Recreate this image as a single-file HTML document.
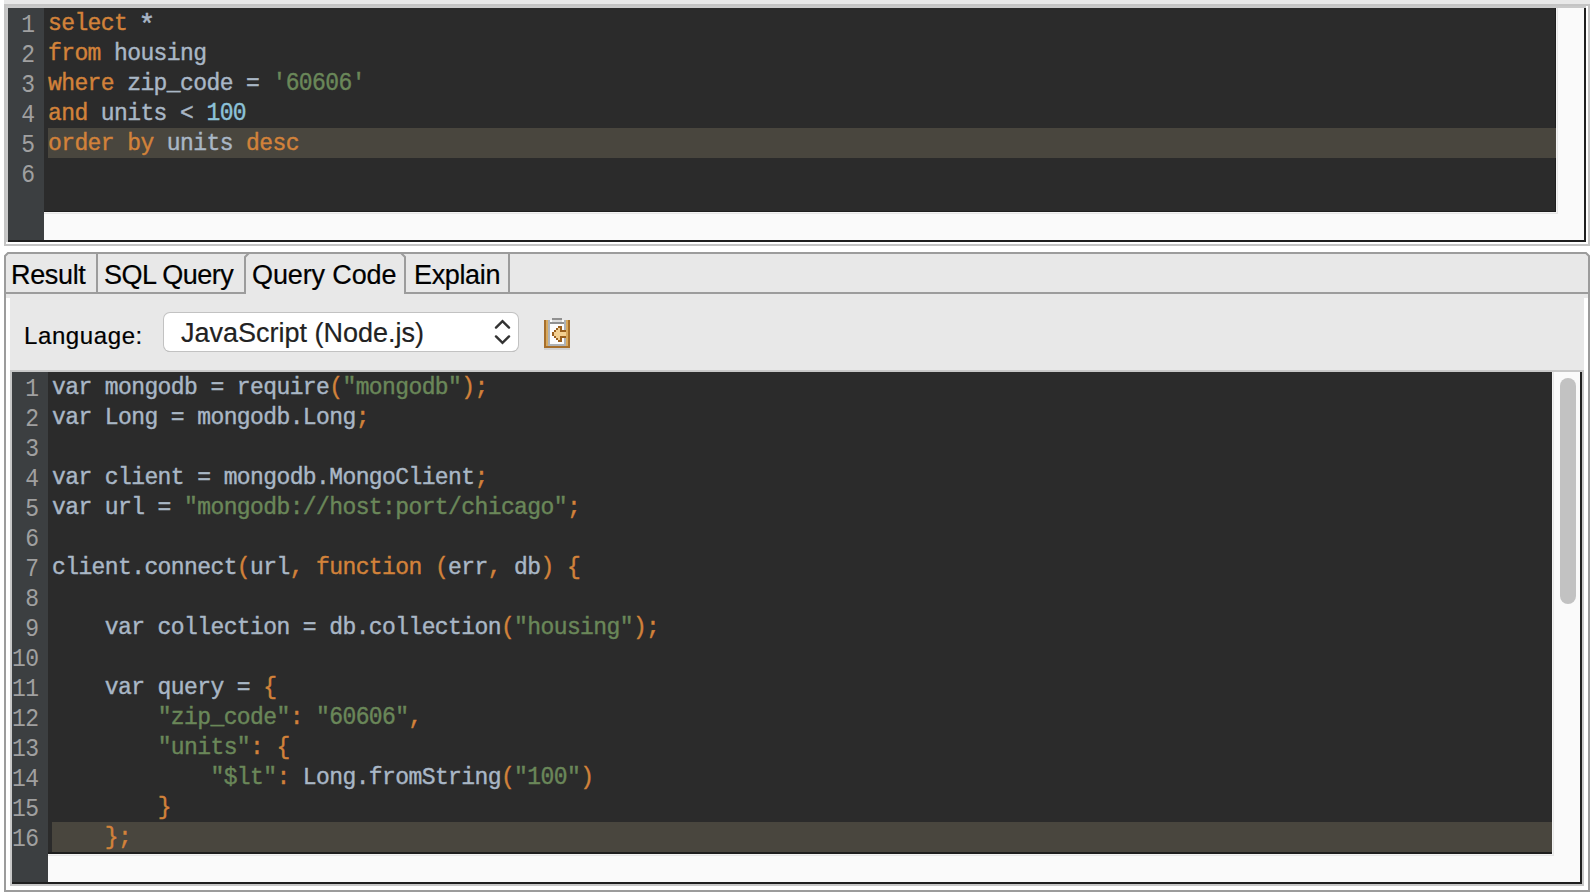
<!DOCTYPE html>
<html><head><meta charset="utf-8">
<style>
*{margin:0;padding:0;box-sizing:border-box}
html,body{width:1590px;height:892px;overflow:hidden;background:#fff;position:relative}
.abs{position:absolute}
.mono{font-family:"Liberation Mono",monospace;font-size:23px;letter-spacing:-0.6px;line-height:30px;white-space:pre;-webkit-text-stroke:0.4px}
.sans{font-family:"Liberation Sans",sans-serif;white-space:pre;color:#000}
.k{color:#d2823a}.s{color:#6a8759}.n{color:#8cc2d8}
.ln{position:absolute;left:0;height:30px;color:#a0a0a0;text-align:right;transform:translateY(3px) scaleY(1.09);transform-origin:0 21.1px;-webkit-text-stroke:0}
.cl{position:absolute;height:30px;color:#a9b7c6;transform:translateY(1px)}
.hl{background:#49463e}
.d{display:inline-block;transform:scaleY(1.12);transform-origin:0 21.1px}
.tab{top:258px;font-size:27px;line-height:34px;-webkit-text-stroke:0.2px #000}
</style></head><body>
<!-- top strip -->
<div class="abs" style="left:4px;top:0;width:1586px;height:4px;background:#e8e8e8"></div>
<!-- editor 1 frame -->
<div class="abs" style="left:4px;top:4px;width:1586px;height:242px;background:#c4c4c4"></div>
<div class="abs" style="left:6px;top:6px;width:1582px;height:238px;background:#fff"></div>
<div class="abs" style="left:6px;top:6px;width:1580px;height:236px;background:#c9c9c9"></div>
<div class="abs" style="left:8px;top:8px;width:1578px;height:234px;background:#1f1f1f"></div>
<div class="abs" style="left:8px;top:8px;width:1576px;height:232px;background:#fafafa"></div>
<div class="abs" style="left:8px;top:8px;width:36px;height:232px;background:#3c3f41"></div>
<div class="abs" style="left:44px;top:8px;width:1512px;height:204px;background:#2b2b2b"></div>
<div class="abs" style="left:44px;top:211px;width:1512px;height:1px;background:#1e1e1e"></div>
<div class="abs" style="left:1555px;top:8px;width:1px;height:204px;background:#1e1e1e"></div>
<div class="abs" style="left:44px;top:212px;width:1513px;height:1px;background:#f3f3f3"></div>
<div class="abs" style="left:1556px;top:8px;width:1px;height:205px;background:#f3f3f3"></div>
<div class="abs" style="left:44px;top:213px;width:1514px;height:1px;background:#e7e7e7"></div>
<div class="abs" style="left:1557px;top:8px;width:1px;height:206px;background:#e7e7e7"></div>
<div class="abs mono" id="ed1" style="left:8px;top:8px;width:1548px;height:204px">
<div class="hl" style="position:absolute;height:30px;left:40px;top:120px;width:1508px"></div>
<div class="ln" style="top:0;width:26.5px">1</div>
<div class="ln" style="top:30px;width:26.5px">2</div>
<div class="ln" style="top:60px;width:26.5px">3</div>
<div class="ln" style="top:90px;width:26.5px">4</div>
<div class="ln" style="top:120px;width:26.5px">5</div>
<div class="ln" style="top:150px;width:26.5px">6</div>
<div class="cl" style="left:40px;top:0"><span class="k">select</span> <span style="display:inline-block;transform:translateY(1.3px) scale(1.22)">*</span></div>
<div class="cl" style="left:40px;top:30px"><span class="k">from</span> housing</div>
<div class="cl" style="left:40px;top:60px"><span class="k">where</span> zip_code = <span class="s">'<span class="d">60606</span>'</span></div>
<div class="cl" style="left:40px;top:90px"><span class="k">and</span> units &lt; <span class="n"><span class="d">100</span></span></div>
<div class="cl" style="left:40px;top:120px"><span class="k">order</span> <span class="k">by</span> units <span class="k">desc</span></div>
</div>

<!-- tab header -->
<svg class="abs" style="left:0;top:0" width="1590" height="892">
<path d="M5,891 L5,256 L8,253 L1586,253 L1589,256 L1589,891 Z" fill="#e8e8e8" stroke="none"/>
<path d="M5,298 L5,256 L8,253 L1586,253 L1589,256 L1589,298" fill="none" stroke="#9c9c9c" stroke-width="2"/>
</svg>
<div class="abs" style="left:4px;top:292px;width:1586px;height:2px;background:#9c9c9c"></div>
<div class="abs" style="left:246px;top:292px;width:158px;height:2px;background:#e8e8e8"></div>
<div class="abs" style="left:96px;top:254px;width:2px;height:38px;background:#9c9c9c"></div>
<div class="abs" style="left:508px;top:254px;width:2px;height:38px;background:#9c9c9c"></div>
<svg class="abs" style="left:0;top:0" width="1590" height="892">
<path d="M245,294 L245,257 L249,253 L401,253 L405,257 L405,294" fill="#e8e8e8" stroke="#9c9c9c" stroke-width="2"/>
</svg>
<div class="abs" style="left:246px;top:292px;width:158px;height:4px;background:#e8e8e8"></div>
<div class="abs sans tab" style="left:11px;letter-spacing:-0.35px">Result</div>
<div class="abs sans tab" style="left:104px;letter-spacing:-0.55px">SQL Query</div>
<div class="abs sans tab" style="left:252px;letter-spacing:-0.12px">Query Code</div>
<div class="abs sans tab" style="left:414px;letter-spacing:-0.35px">Explain</div>

<!-- content pane -->
<div class="abs" style="left:4px;top:294px;width:2px;height:598px;background:#9c9c9c"></div>
<div class="abs" style="left:1588px;top:294px;width:2px;height:598px;background:#9c9c9c"></div>
<div class="abs" style="left:4px;top:890px;width:1586px;height:2px;background:#9c9c9c"></div>
<div class="abs" style="left:6px;top:298px;width:4px;height:592px;background:#fff"></div>
<div class="abs" style="left:1584px;top:298px;width:4px;height:592px;background:#fff"></div>
<div class="abs" style="left:6px;top:886px;width:1582px;height:4px;background:#fff"></div>

<div class="abs sans" style="left:24px;top:321px;font-size:24px;line-height:30px;letter-spacing:0.6px;-webkit-text-stroke:0.2px #000">Language:</div>
<div class="abs" style="left:164px;top:313px;width:354px;height:37.5px;background:#fff;border-radius:6px;box-shadow:0 0 0 1px #c2c2c2, 0 1px 0.6px 0 #a8a8a8"></div>
<div class="abs sans" style="left:181px;top:317px;font-size:27px;line-height:32px;color:#222;-webkit-text-stroke:0.2px #222">JavaScript (Node.js)</div>
<svg class="abs" style="left:490px;top:316px" width="26" height="32">
<path d="M6,11.6 L12.5,5.1 L19,11.6" fill="none" stroke="#333" stroke-width="2.4" stroke-linecap="round"/>
<path d="M6,20.4 L12.5,26.9 L19,20.4" fill="none" stroke="#333" stroke-width="2.4" stroke-linecap="round"/>
</svg>
<!-- clipboard -->
<svg class="abs" style="left:544px;top:318px" width="26" height="32" shape-rendering="crispEdges"><rect x="8" y="0" width="10" height="2" fill="#909090"/><rect x="0" y="2" width="2" height="2" fill="#a66f2c"/><rect x="2" y="2" width="2" height="2" fill="#d8a95e"/><rect x="4" y="2" width="2" height="2" fill="#aeb2b6"/><rect x="6" y="2" width="2" height="2" fill="#fcfcfc"/><rect x="8" y="2" width="10" height="2" fill="#dcdcdc"/><rect x="18" y="2" width="2" height="2" fill="#fcfcfc"/><rect x="20" y="2" width="2" height="2" fill="#aeb2b6"/><rect x="22" y="2" width="2" height="2" fill="#d8a95e"/><rect x="24" y="2" width="2" height="2" fill="#a66f2c"/><rect x="0" y="4" width="2" height="2" fill="#a66f2c"/><rect x="2" y="4" width="2" height="2" fill="#d8a95e"/><rect x="4" y="4" width="2" height="2" fill="#aeb2b6"/><rect x="6" y="4" width="14" height="2" fill="#909090"/><rect x="20" y="4" width="2" height="2" fill="#aeb2b6"/><rect x="22" y="4" width="2" height="2" fill="#d8a95e"/><rect x="24" y="4" width="2" height="2" fill="#a66f2c"/><rect x="0" y="6" width="2" height="2" fill="#a66f2c"/><rect x="2" y="6" width="2" height="2" fill="#d8a95e"/><rect x="4" y="6" width="2" height="2" fill="#aeb2b6"/><rect x="6" y="6" width="14" height="2" fill="#fcfcfc"/><rect x="20" y="6" width="2" height="2" fill="#aeb2b6"/><rect x="22" y="6" width="2" height="2" fill="#d8a95e"/><rect x="24" y="6" width="2" height="2" fill="#a66f2c"/><rect x="0" y="8" width="2" height="2" fill="#a66f2c"/><rect x="2" y="8" width="2" height="2" fill="#d8a95e"/><rect x="4" y="8" width="2" height="2" fill="#aeb2b6"/><rect x="6" y="8" width="8" height="2" fill="#fcfcfc"/><rect x="14" y="8" width="4" height="2" fill="#9a5f1e"/><rect x="18" y="8" width="2" height="2" fill="#fcfcfc"/><rect x="20" y="8" width="2" height="2" fill="#aeb2b6"/><rect x="22" y="8" width="2" height="2" fill="#d8a95e"/><rect x="24" y="8" width="2" height="2" fill="#a66f2c"/><rect x="0" y="10" width="2" height="2" fill="#a66f2c"/><rect x="2" y="10" width="2" height="2" fill="#d8a95e"/><rect x="4" y="10" width="2" height="2" fill="#aeb2b6"/><rect x="6" y="10" width="6" height="2" fill="#fcfcfc"/><rect x="12" y="10" width="2" height="2" fill="#9a5f1e"/><rect x="14" y="10" width="2" height="2" fill="#f3cf90"/><rect x="16" y="10" width="2" height="2" fill="#9a5f1e"/><rect x="18" y="10" width="2" height="2" fill="#fcfcfc"/><rect x="20" y="10" width="2" height="2" fill="#aeb2b6"/><rect x="22" y="10" width="2" height="2" fill="#d8a95e"/><rect x="24" y="10" width="2" height="2" fill="#a66f2c"/><rect x="0" y="12" width="2" height="2" fill="#a66f2c"/><rect x="2" y="12" width="2" height="2" fill="#d8a95e"/><rect x="4" y="12" width="2" height="2" fill="#aeb2b6"/><rect x="6" y="12" width="4" height="2" fill="#fcfcfc"/><rect x="10" y="12" width="2" height="2" fill="#9a5f1e"/><rect x="12" y="12" width="4" height="2" fill="#f3cf90"/><rect x="16" y="12" width="6" height="2" fill="#9a5f1e"/><rect x="22" y="12" width="2" height="2" fill="#d8a95e"/><rect x="24" y="12" width="2" height="2" fill="#a66f2c"/><rect x="0" y="14" width="2" height="2" fill="#a66f2c"/><rect x="2" y="14" width="2" height="2" fill="#d8a95e"/><rect x="4" y="14" width="2" height="2" fill="#aeb2b6"/><rect x="6" y="14" width="2" height="2" fill="#fcfcfc"/><rect x="8" y="14" width="2" height="2" fill="#9a5f1e"/><rect x="10" y="14" width="12" height="2" fill="#f3cf90"/><rect x="22" y="14" width="2" height="2" fill="#d8a95e"/><rect x="24" y="14" width="2" height="2" fill="#a66f2c"/><rect x="0" y="16" width="2" height="2" fill="#a66f2c"/><rect x="2" y="16" width="2" height="2" fill="#d8a95e"/><rect x="4" y="16" width="2" height="2" fill="#aeb2b6"/><rect x="6" y="16" width="2" height="2" fill="#fcfcfc"/><rect x="8" y="16" width="2" height="2" fill="#9a5f1e"/><rect x="10" y="16" width="12" height="2" fill="#f3cf90"/><rect x="22" y="16" width="2" height="2" fill="#d8a95e"/><rect x="24" y="16" width="2" height="2" fill="#a66f2c"/><rect x="0" y="18" width="2" height="2" fill="#a66f2c"/><rect x="2" y="18" width="2" height="2" fill="#d8a95e"/><rect x="4" y="18" width="2" height="2" fill="#aeb2b6"/><rect x="6" y="18" width="4" height="2" fill="#fcfcfc"/><rect x="10" y="18" width="2" height="2" fill="#9a5f1e"/><rect x="12" y="18" width="4" height="2" fill="#f3cf90"/><rect x="16" y="18" width="6" height="2" fill="#9a5f1e"/><rect x="22" y="18" width="2" height="2" fill="#d8a95e"/><rect x="24" y="18" width="2" height="2" fill="#a66f2c"/><rect x="0" y="20" width="2" height="2" fill="#a66f2c"/><rect x="2" y="20" width="2" height="2" fill="#d8a95e"/><rect x="4" y="20" width="2" height="2" fill="#aeb2b6"/><rect x="6" y="20" width="6" height="2" fill="#fcfcfc"/><rect x="12" y="20" width="2" height="2" fill="#9a5f1e"/><rect x="14" y="20" width="2" height="2" fill="#f3cf90"/><rect x="16" y="20" width="2" height="2" fill="#9a5f1e"/><rect x="18" y="20" width="2" height="2" fill="#fcfcfc"/><rect x="20" y="20" width="2" height="2" fill="#aeb2b6"/><rect x="22" y="20" width="2" height="2" fill="#d8a95e"/><rect x="24" y="20" width="2" height="2" fill="#a66f2c"/><rect x="0" y="22" width="2" height="2" fill="#a66f2c"/><rect x="2" y="22" width="2" height="2" fill="#d8a95e"/><rect x="4" y="22" width="2" height="2" fill="#aeb2b6"/><rect x="6" y="22" width="8" height="2" fill="#fcfcfc"/><rect x="14" y="22" width="4" height="2" fill="#9a5f1e"/><rect x="18" y="22" width="2" height="2" fill="#fcfcfc"/><rect x="20" y="22" width="2" height="2" fill="#aeb2b6"/><rect x="22" y="22" width="2" height="2" fill="#d8a95e"/><rect x="24" y="22" width="2" height="2" fill="#a66f2c"/><rect x="0" y="24" width="2" height="2" fill="#a66f2c"/><rect x="2" y="24" width="2" height="2" fill="#d8a95e"/><rect x="4" y="24" width="2" height="2" fill="#aeb2b6"/><rect x="6" y="24" width="14" height="2" fill="#fcfcfc"/><rect x="20" y="24" width="2" height="2" fill="#aeb2b6"/><rect x="22" y="24" width="2" height="2" fill="#d8a95e"/><rect x="24" y="24" width="2" height="2" fill="#a66f2c"/><rect x="0" y="26" width="2" height="2" fill="#a66f2c"/><rect x="2" y="26" width="2" height="2" fill="#d8a95e"/><rect x="4" y="26" width="18" height="2" fill="#aeb2b6"/><rect x="22" y="26" width="2" height="2" fill="#d8a95e"/><rect x="24" y="26" width="2" height="2" fill="#a66f2c"/><rect x="0" y="28" width="26" height="2" fill="#a66f2c"/><rect x="0" y="30" width="26" height="2" fill="#d2d2d2"/></svg>

<!-- editor 2 -->
<div class="abs" style="left:10px;top:370px;width:1574px;height:516px;background:#c8c8c8"></div>
<div class="abs" style="left:12px;top:372px;width:1570px;height:512px;background:#1f1f1f"></div>
<div class="abs" style="left:12px;top:372px;width:1568px;height:510px;background:#fafafa"></div>
<div class="abs" style="left:12px;top:372px;width:36px;height:510px;background:#3c3f41"></div>
<div class="abs" style="left:48px;top:372px;width:1504px;height:482px;background:#2b2b2b"></div>
<div class="abs" style="left:48px;top:852px;width:1504px;height:2px;background:#1e1e1e"></div>
<div class="abs" style="left:48px;top:854px;width:1505px;height:1px;background:#f3f3f3"></div>
<div class="abs" style="left:1552px;top:372px;width:1px;height:483px;background:#f3f3f3"></div>
<div class="abs" style="left:48px;top:855px;width:1506px;height:1px;background:#e7e7e7"></div>
<div class="abs" style="left:1553px;top:372px;width:1px;height:484px;background:#e7e7e7"></div>
<div class="abs" style="left:1560px;top:378px;width:16px;height:226px;background:#c2c2c2;border-radius:8px"></div>
<div class="abs mono" id="ed2" style="left:12px;top:372px;width:1540px;height:480px;overflow:hidden">
<div class="hl" style="position:absolute;height:30px;left:40px;top:450px;width:1500px"></div>
<div class="ln" style="top:0;width:26.5px">1</div>
<div class="ln" style="top:30px;width:26.5px">2</div>
<div class="ln" style="top:60px;width:26.5px">3</div>
<div class="ln" style="top:90px;width:26.5px">4</div>
<div class="ln" style="top:120px;width:26.5px">5</div>
<div class="ln" style="top:150px;width:26.5px">6</div>
<div class="ln" style="top:180px;width:26.5px">7</div>
<div class="ln" style="top:210px;width:26.5px">8</div>
<div class="ln" style="top:240px;width:26.5px">9</div>
<div class="ln" style="top:270px;width:26.5px">10</div>
<div class="ln" style="top:300px;width:26.5px">11</div>
<div class="ln" style="top:330px;width:26.5px">12</div>
<div class="ln" style="top:360px;width:26.5px">13</div>
<div class="ln" style="top:390px;width:26.5px">14</div>
<div class="ln" style="top:420px;width:26.5px">15</div>
<div class="ln" style="top:450px;width:26.5px">16</div>
<div class="cl" style="left:40px;top:0">var mongodb = require<span class="k">(</span><span class="s">"mongodb"</span><span class="k">);</span></div>
<div class="cl" style="left:40px;top:30px">var Long = mongodb.Long<span class="k">;</span></div>
<div class="cl" style="left:40px;top:90px">var client = mongodb.MongoClient<span class="k">;</span></div>
<div class="cl" style="left:40px;top:120px">var url = <span class="s">"mongodb://host:port/chicago"</span><span class="k">;</span></div>
<div class="cl" style="left:40px;top:180px">client.connect<span class="k">(</span>url<span class="k">,</span> <span class="k">function</span> <span class="k">(</span>err<span class="k">,</span> db<span class="k">)</span> <span class="k">{</span></div>
<div class="cl" style="left:40px;top:240px">    var collection = db.collection<span class="k">(</span><span class="s">"housing"</span><span class="k">);</span></div>
<div class="cl" style="left:40px;top:300px">    var query = <span class="k">{</span></div>
<div class="cl" style="left:40px;top:330px">        <span class="s">"zip_code"</span><span class="k">:</span> <span class="s">"<span class="d">60606</span>"</span><span class="k">,</span></div>
<div class="cl" style="left:40px;top:360px">        <span class="s">"units"</span><span class="k">:</span> <span class="k">{</span></div>
<div class="cl" style="left:40px;top:390px">            <span class="s">"$lt"</span><span class="k">:</span> Long.fromString<span class="k">(</span><span class="s">"<span class="d">100</span>"</span><span class="k">)</span></div>
<div class="cl" style="left:40px;top:420px">        <span class="k">}</span></div>
<div class="cl" style="left:40px;top:450px">    <span class="k">};</span></div>
</div>
</body></html>
